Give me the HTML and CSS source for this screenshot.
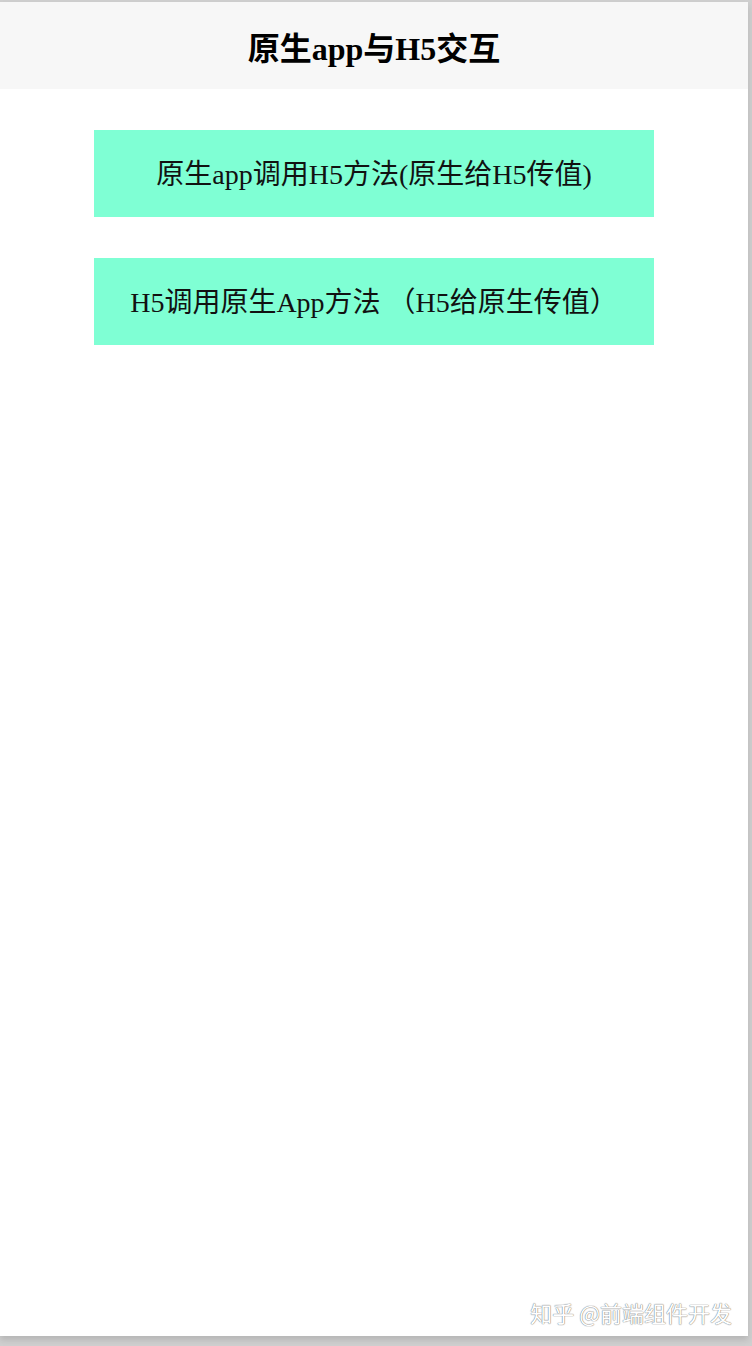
FILE: index.html
```html
<!DOCTYPE html>
<html>
<head>
    <meta charset="utf-8">
    <title>原生app与H5交互</title>
    <link rel="stylesheet" href="styles.css">
</head>
<body>
    <div class="screen">
        <div class="header">原生app与H5交互</div>
        <div class="content">
            <div class="btn">原生app调用H5方法(原生给H5传值)</div>
            <div class="btn">H5调用原生App方法 （H5给原生传值）</div>
        </div>
        <div class="mark">知乎 @前端组件开发</div>
    </div>
</body>
</html>
```

FILE: styles.css
```css
html, body {
    margin: 0;
    padding: 0;
}
body {
    background-color: #cfcfcf;
    height: 1346px;
    overflow: hidden;
    font-family: "Liberation Serif", "Noto Sans CJK SC", serif;
}
.screen {
    position: relative;
    width: 748px;
    height: 1334px;
    margin-top: 2px;
    background-color: #fff;
    box-shadow: 0 4px 6px rgba(0, 0, 0, 0.12);
}
.header {
    height: 87px;
    background-color: #f7f7f7;
    display: flex;
    justify-content: center;
    align-items: center;
    font-size: 32px;
    font-weight: bold;
    color: #000;
}
.content {
    display: flex;
    flex-direction: column;
    align-items: center;
    gap: 41px;
    padding-top: 41px;
}
.btn {
    width: 560px;
    height: 87px;
    padding-bottom: 4px;
    box-sizing: border-box;
    background-color: #7fffd4;
    display: flex;
    justify-content: center;
    align-items: center;
    font-size: 28px;
    color: #111;
}
.mark {
    position: absolute;
    right: 16px;
    bottom: 8px;
    font-family: "Noto Sans CJK SC", sans-serif;
    font-size: 22px;
    color: #fff;
    text-shadow: 0 0 1px #777, 0 0 1px #777;
}
```
